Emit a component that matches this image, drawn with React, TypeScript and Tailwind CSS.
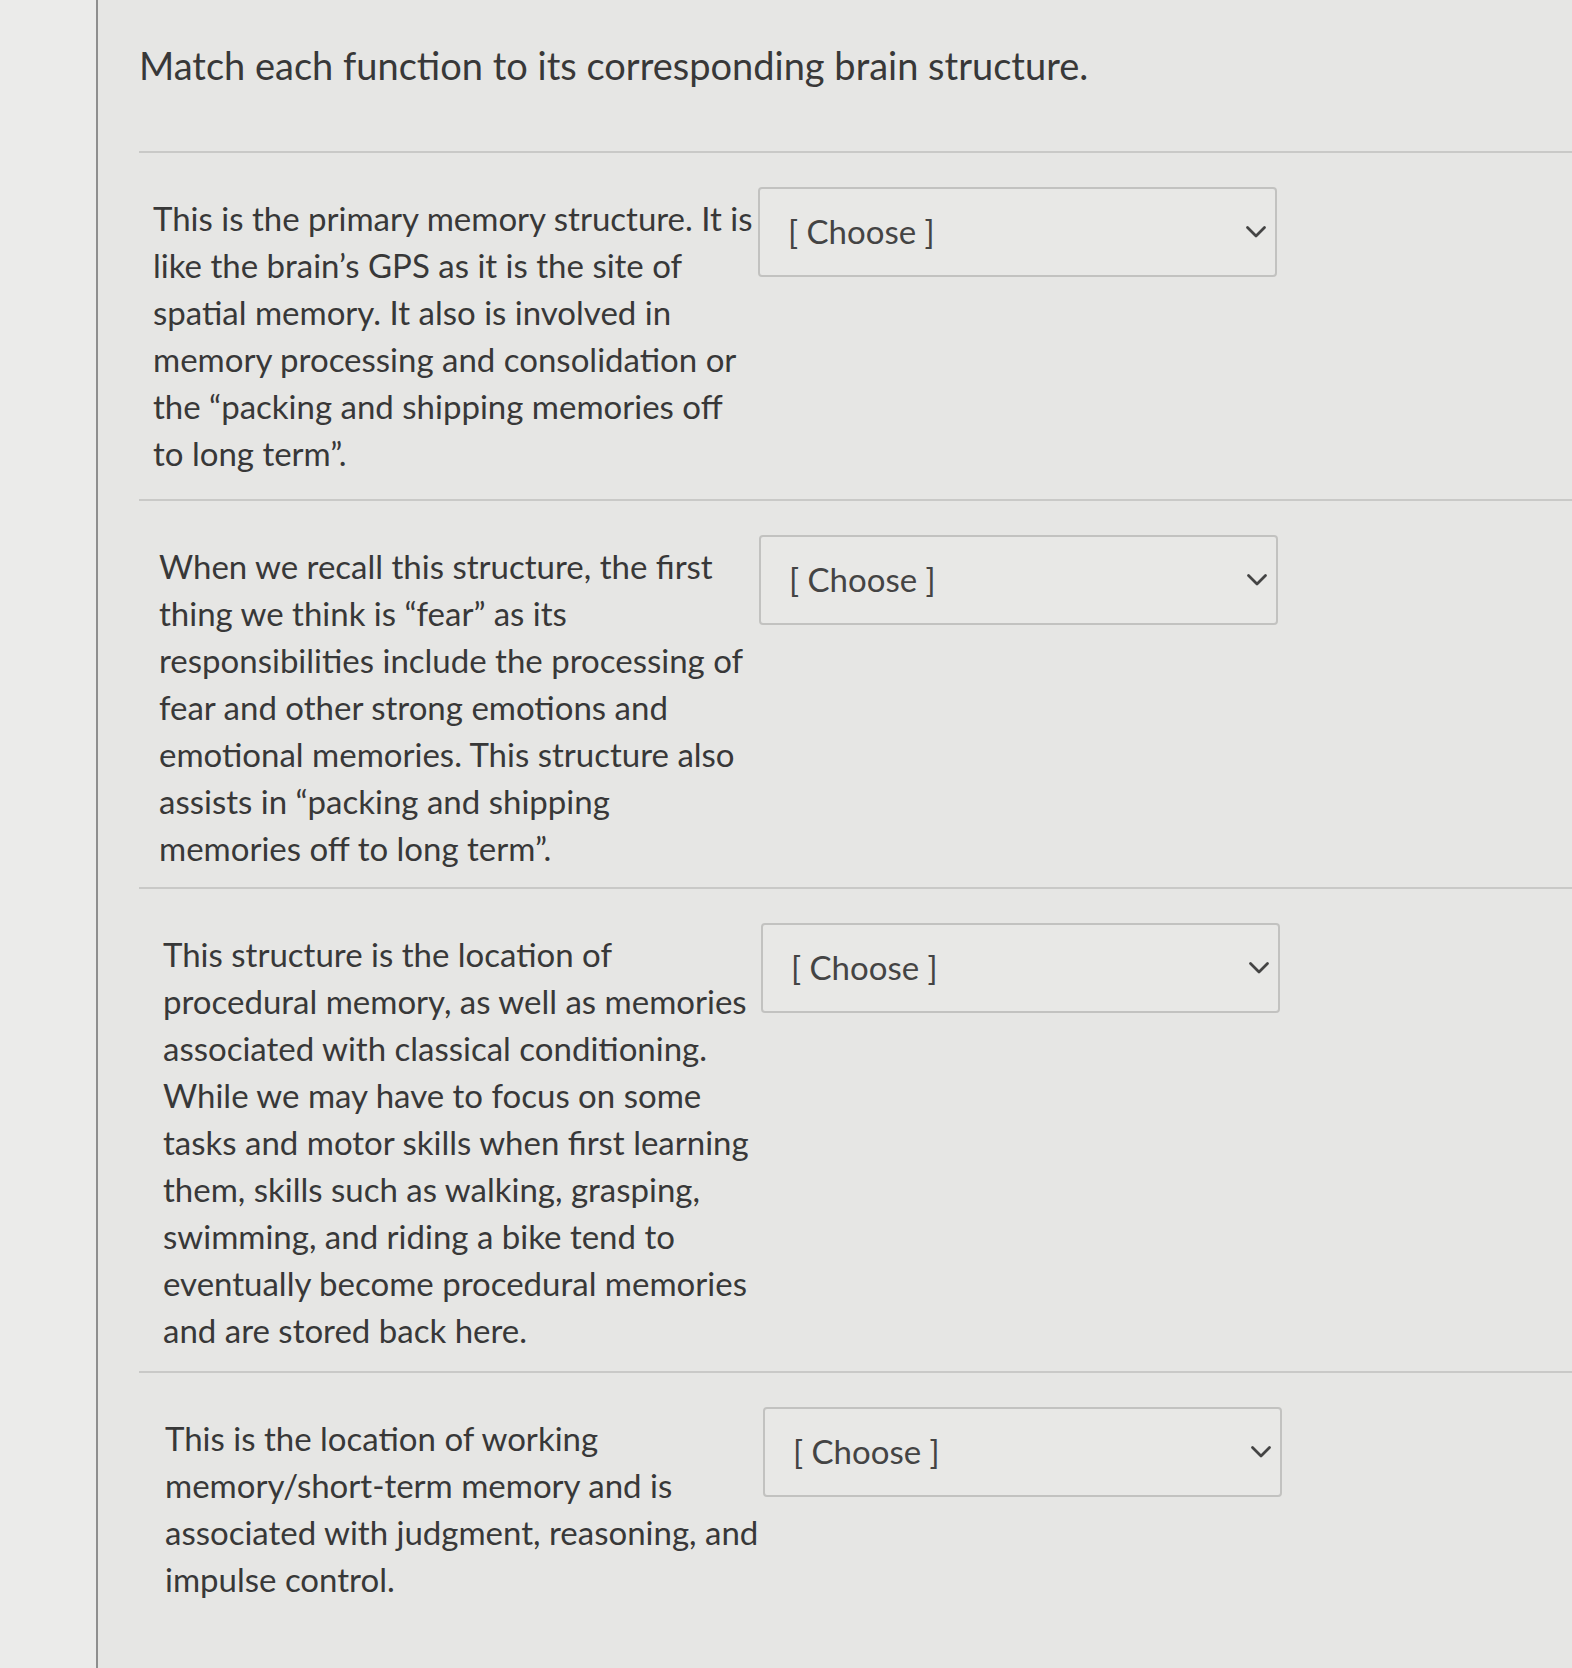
import React from "react";

const rows: { lines: string[]; pl: string; sl: string; pb: string }[] = [
  {
    lines: [
      "This is the primary memory structure. It is",
      "like the brain\u2019s GPS as it is the site of",
      "spatial memory. It also is involved in",
      "memory processing and consolidation or",
      "the \u201cpacking and shipping memories off",
      "to long term\u201d.",
    ],
    pl: "pl-[14px]",
    sl: "ml-[2px]",
    pb: "pb-[22px]",
  },
  {
    lines: [
      "When we recall this structure, the first",
      "thing we think is \u201cfear\u201d as its",
      "responsibilities include the processing of",
      "fear and other strong emotions and",
      "emotional memories. This structure also",
      "assists in \u201cpacking and shipping",
      "memories off to long term\u201d.",
    ],
    pl: "pl-[20px]",
    sl: "ml-[-3px]",
    pb: "pb-[15px]",
  },
  {
    lines: [
      "This structure is the location of",
      "procedural memory, as well as memories",
      "associated with classical conditioning.",
      "While we may have to focus on some",
      "tasks and motor skills when first learning",
      "them, skills such as walking, grasping,",
      "swimming, and riding a bike tend to",
      "eventually become procedural memories",
      "and are stored back here.",
    ],
    pl: "pl-[24px]",
    sl: "ml-[-5px]",
    pb: "pb-[17px]",
  },
  {
    lines: [
      "This is the location of working",
      "memory/short-term memory and is",
      "associated with judgment, reasoning, and",
      "impulse control.",
    ],
    pl: "pl-[26px]",
    sl: "ml-[-5px]",
    pb: "pb-[20px]",
  },
];

function Chevron() {
  return (
    <svg width="22" height="14" viewBox="0 0 22 14" fill="none">
      <path d="M2.5 2.5 L11 11 L19.5 2.5" stroke="#444444" strokeWidth="2.8" strokeLinecap="round" strokeLinejoin="round" />
    </svg>
  );
}

export default function App() {
  return (
    <div
      className="flex min-h-[1668px] w-full bg-[#e6e6e4] text-[#3b3b3b]"
      style={{ fontFamily: "Lato, 'Open Sans', sans-serif" }}
    >
      <div className="w-[98px] shrink-0 border-r-2 border-[#8e8e8e] bg-[#ebebea]" />
      <div className="flex-1 pl-[41px]">
        <h1 className="pt-[43px] text-[38px] leading-[44px] font-normal text-[#383838]">
          Match each function to its corresponding brain structure.
        </h1>
        <div className="mt-[64px] border-t-2 border-[#c9c9c7]">
          {rows.map((r, i) => (
            <div
              key={i}
              className={`flex items-start pt-[34px] ${r.pb} ${r.pl} ${i < rows.length - 1 ? "border-b-2 border-[#c9c9c7]" : ""}`}
            >
              <p className="mt-[8px] w-[603px] shrink-0 text-[33px] leading-[47px] text-[#383838]">
                {r.lines.map((l, j) => (
                  <span key={j} className="block whitespace-nowrap">
                    {l}
                  </span>
                ))}
              </p>
              <div
                className={`flex h-[90px] w-[519px] shrink-0 items-center justify-between rounded-[4px] border-2 border-[#c2c2c0] bg-[#e8e8e6] pl-[28px] pr-[8px] ${r.sl}`}
              >
                <span className="text-[33px] text-[#444]">[ Choose ]</span>
                <Chevron />
              </div>
            </div>
          ))}
        </div>
      </div>
    </div>
  );
}
